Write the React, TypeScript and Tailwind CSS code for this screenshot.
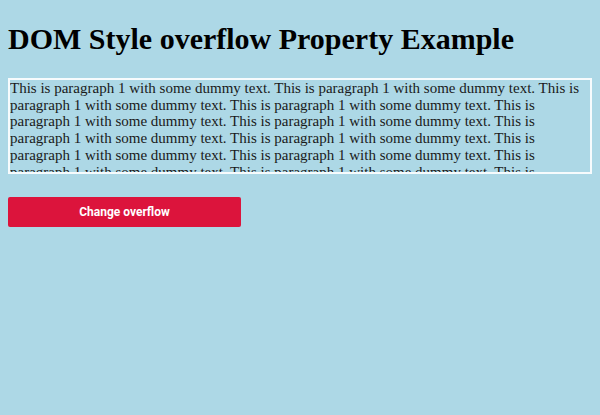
export default function App() {
  const text = Array(20).fill("This is paragraph 1 with some dummy text.").join(" ");
  return (
    <div className="min-h-[415px] bg-[#add8e6] px-2 pt-[22px] font-['Liberation_Serif',serif] text-black">
      <h1 className="text-[30px] font-bold leading-[34px]">DOM Style overflow Property Example</h1>
      <p className="mt-[22px] h-[96px] overflow-hidden border-2 border-white/90 text-[15px] leading-[16.7px] text-[#1a1a1a]">
        {text}
      </p>
      <button className="mt-[23px] h-[30px] w-[233px] rounded-[2px] bg-[#dc143c] font-['Roboto',sans-serif] text-[12px] font-bold text-white">
        Change overflow
      </button>
    </div>
  );
}
